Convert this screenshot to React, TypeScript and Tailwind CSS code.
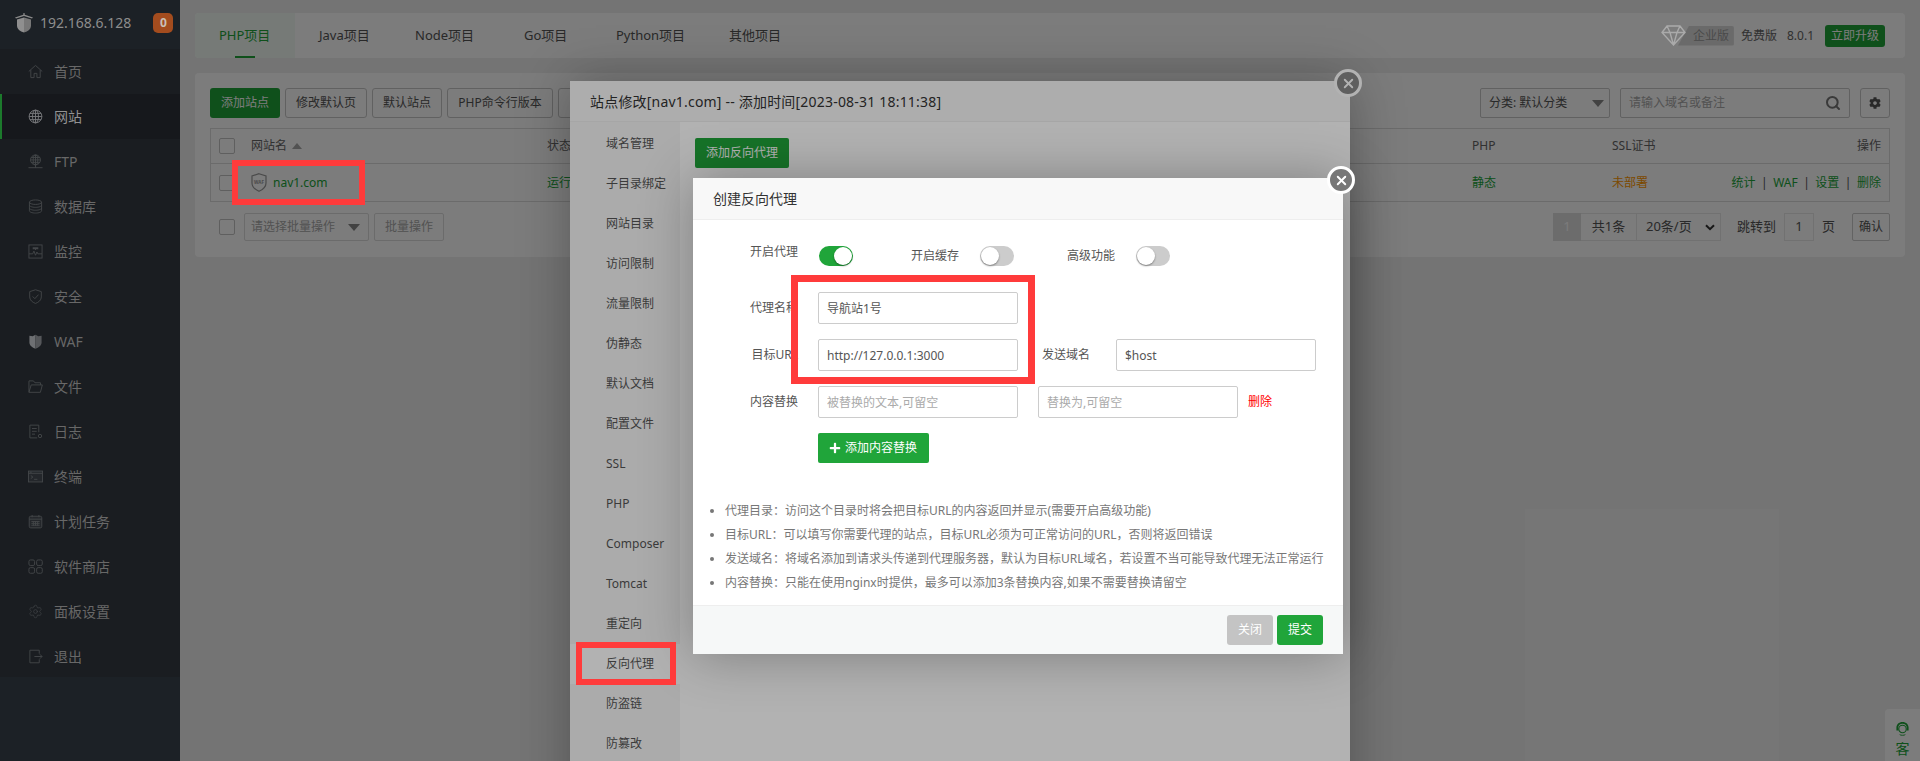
import React from "react";
import { Search, Settings, X } from "lucide-react";
import { FaCog, FaPlus } from "react-icons/fa";

const S = (p: { children: React.ReactNode }) => (
  <svg viewBox="0 0 16 16" width="15" height="15" fill="none" stroke="currentColor" strokeWidth="1" className="shrink-0">
    {p.children}
  </svg>
);

const Globe = () => (
  <>
    <circle cx="8" cy="8" r="6.8" />
    <ellipse cx="8" cy="8" rx="3.2" ry="6.8" />
    <path d="M1.2 8H14.8M2 4.7H14M2 11.3H14M8 1.2V14.8" />
  </>
);

const menu: { t: string; i: React.ReactNode; active?: boolean }[] = [
  { t: "首页", i: <S><path d="M.8 8 8 1.5 15.2 8M3 6.5V14.5H6.5V10H9.5V14.5H13V6.5" /></S> },
  { t: "网站", active: true, i: <S><Globe /></S> },
  { t: "FTP", i: <S><circle cx="8" cy="6.3" r="5.3" /><ellipse cx="8" cy="6.3" rx="2.5" ry="5.3" /><path d="M2.7 6.3H13.3M3.4 3.7H12.6M3.4 8.9H12.6M8 1V14.6M.5 14.6H15.5" /></S> },
  { t: "数据库", i: <S><ellipse cx="8" cy="3.4" rx="6.5" ry="2.4" /><path d="M1.5 3.4V12.6C1.5 13.9 4.4 15 8 15S14.5 13.9 14.5 12.6V3.4M1.5 6.5C1.5 7.8 4.4 8.9 8 8.9S14.5 7.8 14.5 6.5M1.5 9.6C1.5 10.9 4.4 12 8 12S14.5 10.9 14.5 9.6" /></S> },
  { t: "监控", i: <S><rect x="1" y="1" width="14" height="14" /><path d="M5 3.5H11V5.5H8.5V6.5H7.5V5.5H5Z" fill="currentColor" stroke="none" /><path d="M1 10.5H5L6.3 7.5 8 12 9.5 8.5 10.5 10.5H15" /></S> },
  { t: "安全", i: <S><path d="M8 .8 14.2 2.8V8.5C14.2 12 11.2 14.2 8 15.4 4.8 14.2 1.8 12 1.8 8.5V2.8Z" /><path d="M5 8 7.3 10.3 11.2 6" /></S> },
  { t: "WAF", i: <S><path d="M8 .8 5 2.5 1.5 1.8V9C1.5 12.2 4.5 14.4 8 15.6Z" fill="#6e7073" stroke="none" /><path d="M8 .8 11 2.5 14.5 1.8V9C14.5 12.2 11.5 14.4 8 15.6Z" fill="#55575a" stroke="none" /></S> },
  { t: "文件", i: <S><path d="M1 14.2V2H5.8L7.3 4H13.3V6.3M1 14.2H13.2L15.3 6.3H3.4Z" /></S> },
  { t: "日志", i: <S><path d="M11.5 8.8V1.2H2V14.8H9.8M4.2 4.8H9.3M4.2 7.8H9.3M4.2 10.8H7.5" /><circle cx="12.8" cy="12.8" r="1.8" /></S> },
  { t: "终端", i: <S><rect x=".5" y="2.2" width="15" height="11.6" fill="#24272b" /><path d="M.5 4.6H15.5M1.8 3.4H4" /><path d="M3 7 5.2 8.6 3 10.2M6.5 11H10" /></S> },
  { t: "计划任务", i: <S><rect x="1.3" y="2.4" width="13.4" height="12.4" rx="1.6" fill="#24272b" /><path d="M4.4 1V3.5M11.6 1V3.5M1.3 5.5H14.7M3.6 8H12.4M3.6 10H12.4M3.6 12H12.4M5.7 7.5V12.5M8 7.5V12.5M10.3 7.5V12.5" /></S> },
  { t: "软件商店", i: <S><rect x="1" y="1" width="6" height="6" rx="1.6" /><rect x="9.2" y="1" width="6" height="6" rx="1.6" /><rect x="1" y="9.2" width="6" height="6" rx="1.6" /><rect x="9.2" y="9.2" width="6" height="6" rx="1.6" /></S> },
  { t: "面板设置", i: <Settings size={15} strokeWidth={1} className="shrink-0" /> },
  { t: "退出", i: <S><path d="M12 5V1.3H2V14.7H12V11M6.8 8H15M12.6 5.6 15 8 12.6 10.4" /></S> },
];

const Btn = ({ w, children }: { w: string; children?: React.ReactNode }) => (
  <div className={`${w} flex h-[30px] shrink-0 items-center justify-center rounded-[3px] border border-[#c8c8c8] text-[12px] text-[#555]`}>{children}</div>
);

const Check = () => <div className="h-4 w-4 shrink-0 rounded-[2px] border border-[#c4c4c4] bg-white" />;

const Caret = () => (
  <svg width="12" height="7" viewBox="0 0 12 7" className="shrink-0"><path d="M0 0H12L6 7Z" fill="#888" /></svg>
);

const Toggle = ({ on }: { on?: boolean }) => (
  <div className={`${on ? "justify-end bg-[#20a53a]" : "justify-start bg-[#ccc]"} flex h-5 w-[34px] shrink-0 items-center rounded-full p-px`}>
    <div className="h-[18px] w-[18px] rounded-full bg-white shadow-[0_1px_2px_rgba(0,0,0,0.4)]" />
  </div>
);

const Field = ({ value, ph, w = "w-[200px]" }: { value?: string; ph?: string; w?: string }) => (
  <input
    readOnly
    defaultValue={value}
    placeholder={ph}
    className={`${w} h-8 shrink-0 rounded-[2px] border border-[#ccc] pl-2 text-[12px] text-[#555] outline-none placeholder:text-[#aaa]`}
  />
);

const Label = ({ children, c = "" }: { children: React.ReactNode; c?: string }) => (
  <div className={`w-[105px] shrink-0 pr-5 text-right text-[12px] text-[#555] ${c}`}>{children}</div>
);

const sideItems = ["域名管理", "子目录绑定", "网站目录", "访问限制", "流量限制", "伪静态", "默认文档", "配置文件", "SSL", "PHP", "Composer", "Tomcat", "重定向", "反向代理", "防盗链", "防篡改"];

const tabs = [
  { t: "Java项目", w: "w-[96px]" },
  { t: "Node项目", w: "w-[109px]" },
  { t: "Go项目", w: "w-[92px]" },
  { t: "Python项目", w: "w-[113px]" },
  { t: "其他项目", w: "w-[100px]" },
];

const notes = [
  "代理目录：访问这个目录时将会把目标URL的内容返回并显示(需要开启高级功能)",
  "目标URL：可以填写你需要代理的站点，目标URL必须为可正常访问的URL，否则将返回错误",
  "发送域名：将域名添加到请求头传递到代理服务器，默认为目标URL域名，若设置不当可能导致代理无法正常运行",
  "内容替换：只能在使用nginx时提供，最多可以添加3条替换内容,如果不需要替换请留空",
];

const Close = ({ pos, inner }: { pos: string; inner: string }) => (
  <div className={`absolute ${pos} ${inner} flex h-7 w-7 items-center justify-center rounded-full border-[3px] border-white`}>
    <X size={15} strokeWidth={3} color="#fff" />
  </div>
);

export default function App() {
  return (
    <div className="relative flex h-screen w-full overflow-hidden bg-[#f0f0f0] font-['Noto_Sans','Noto_Sans_CJK_SC',sans-serif]">
      {/* sidebar */}
      <aside className="relative z-20 flex w-[180px] shrink-0 flex-col bg-[#1c2126]">
        <div className="flex h-[49px] shrink-0 items-start pt-[13px] pl-[15px]">
          <svg width="18" height="20" viewBox="0 0 18 20" className="shrink-0">
            <path d="M0 4.5 9 1.5 18 4.5 17 5.5 9 3 1 5.5Z" fill="#8a8a8a" />
            <path d="M8.4 0H9.6V2H8.4Z" fill="#8a8a8a" />
            <path d="M2 6.5 9 4.5V19.5C5 18.5 2 16 2 12.5Z" fill="#8f8f8f" />
            <path d="M16 6.5 9 4.5V19.5C13 18.5 16 16 16 12.5Z" fill="#777" />
          </svg>
          <span className="ml-[7px] text-[14px] leading-5 text-[#8d8d8d]">192.168.6.128</span>
          <span className="ml-[22px] flex h-5 w-5 items-center justify-center rounded-[5px] bg-[#a34c1e] text-[12px] font-bold text-[#c9c0b8]">0</span>
        </div>
        <nav className="h-[628px] shrink-0 bg-[#1a1d21] text-[14px]">
          {menu.map((m) => (
            <div
              key={m.t}
              className={`${m.active ? "border-[#1c7a2c] bg-[#16181c] text-[#929292]" : "border-transparent text-[#686868]"} flex h-[45px] items-center border-l-2 pl-[26px]`}
            >
              <span className={m.active ? "text-[#77797c]" : "text-[#434649]"}>{m.i}</span>
              <span className="ml-[11px]">{m.t}</span>
            </div>
          ))}
        </nav>
      </aside>

      {/* page */}
      <main className="flex min-w-0 flex-1 flex-col gap-[15px] px-[15px] pt-[13px]">
        <div className="flex h-[45px] shrink-0 items-center justify-between rounded-[4px] bg-white">
          <div className="flex h-full text-[13px] text-[#555]">
            <div className="relative flex h-full w-[100px] items-center rounded-l-[4px] bg-[#f2fbf5] pl-6 text-[#20a53a]">
              PHP项目
              <div className="absolute bottom-0 left-10 h-[2px] w-5 bg-[#20a53a]" />
            </div>
            {tabs.map((t) => (
              <div key={t.t} className={`${t.w} flex h-full items-center pl-6`}>{t.t}</div>
            ))}
          </div>
          <div className="flex items-center pr-5 text-[12px] text-[#666]">
            <svg width="25" height="21" viewBox="0 0 25 21" fill="none" stroke="#aaa" strokeWidth="1.4" className="relative z-10 shrink-0">
              <path d="M6 1H19L24 7.5 12.5 20 1 7.5ZM1 7.5H24M6 1 9 7.5 12.5 20 16 7.5 19 1" />
            </svg>
            <div className="-ml-2 flex h-5 w-[56px] items-center justify-end rounded-r-[2px] bg-[#dcdcdc] pr-[5px] text-[#999] [clip-path:polygon(20%_0,100%_0,100%_100%,0_100%)]">企业版</div>
            <span className="ml-[7px]">免费版</span>
            <span className="ml-[10px]">8.0.1</span>
            <div className="ml-[11px] flex h-[22px] w-[60px] items-center justify-center rounded-[3px] bg-[#20a53a] text-white">立即升级</div>
          </div>
        </div>

        <div className="h-[184px] shrink-0 rounded-[4px] bg-white p-[15px]">
          <div className="flex justify-between">
            <div className="flex gap-[5px]">
              <div className="flex h-[30px] w-[70px] items-center justify-center rounded-[3px] bg-[#20a53a] text-[12px] text-white">添加站点</div>
              <Btn w="w-[82px]">修改默认页</Btn>
              <Btn w="w-[70px]">默认站点</Btn>
              <Btn w="w-[106px]">PHP命令行版本</Btn>
              <Btn w="w-[60px]" />
            </div>
            <div className="flex gap-[10px]">
              <div className="flex h-[30px] w-[130px] items-center justify-between rounded-[2px] border border-[#c8c8c8] pr-[5px] pl-2 text-[12px] text-[#555]">
                <span>分类: 默认分类</span><Caret />
              </div>
              <div className="flex h-[30px] w-[230px] items-center justify-between rounded-[2px] border border-[#c8c8c8] pr-2 pl-2 text-[12px] text-[#aaa]">
                <span>请输入域名或备注</span><Search size={16} strokeWidth={3} color="#777" />
              </div>
              <div className="flex h-[30px] w-[30px] items-center justify-center rounded-[3px] border border-[#c8c8c8] text-[#555]"><FaCog size={12} /></div>
            </div>
          </div>

          <div className="mt-[10px] border border-[#ddd] text-[12px] text-[#666]">
            <div className="flex h-[35px] items-center border-b border-[#ddd]">
              <div className="w-[40px] shrink-0 pl-2"><Check /></div>
              <div className="flex w-[296px] shrink-0 items-center gap-[5px]">
                网站名
                <svg width="10" height="6" viewBox="0 0 10 6"><path d="M0 6H10L5 0Z" fill="#aaa" /></svg>
              </div>
              <div className="w-[925px] shrink-0">状态</div>
              <div className="w-[140px] shrink-0">PHP</div>
              <div className="flex-1">SSL证书</div>
              <div className="pr-2">操作</div>
            </div>
            <div className="flex h-[37px] items-center">
              <div className="w-[40px] shrink-0 pl-2"><Check /></div>
              <div className="flex w-[296px] shrink-0 items-center gap-[6px]">
                <svg width="16" height="19" viewBox="0 0 16 19" fill="none" className="shrink-0">
                  <path d="M8 .7 15 3V10C15 14 11.5 16.8 8 18.3 4.5 16.8 1 14 1 10V3Z" stroke="#999" strokeWidth="1.2" />
                  <text x="8" y="10.6" textAnchor="middle" fontSize="4.5" fontWeight="700" fill="#999">WAF</text>
                </svg>
                <span className="text-[12px] text-[#20a53a]">nav1.com</span>
              </div>
              <div className="w-[925px] shrink-0 text-[#20a53a]">运行中</div>
              <div className="w-[140px] shrink-0 text-[#20a53a]">静态</div>
              <div className="flex-1 text-[#ff9900]">未部署</div>
              <div className="flex gap-[5.5px] pr-2 text-[#20a53a]">
                <span>统计</span><span className="text-[#555]">|</span><span>WAF</span><span className="text-[#555]">|</span><span>设置</span><span className="text-[#555]">|</span><span>删除</span>
              </div>
            </div>
          </div>

          <div className="mt-[11px] flex items-center">
            <div className="pl-[9px]"><Check /></div>
            <div className="ml-[9px] flex h-7 w-[125px] items-center justify-between rounded-[2px] border border-[#ddd] px-[6px] pr-2 text-[12px] text-[#aaa]">
              <span>请选择批量操作</span><Caret />
            </div>
            <div className="ml-[5px] flex h-7 w-[70px] items-center justify-center rounded-[2px] border border-[#ddd] text-[12px] text-[#aaa]">批量操作</div>
            <div className="ml-auto flex h-7 items-center text-[13px] text-[#555]">
              <div className="flex h-full w-[28px] items-center justify-center bg-[#dedede] text-white">1</div>
              <div className="flex h-full w-[55px] items-center justify-center border-y border-[#e8e8e8]">共1条</div>
              <div className="flex h-full w-[85px] items-center justify-between border border-[#e8e8e8] pr-[5px] pl-[9px]">
                <span>20条/页</span>
                <svg width="10" height="7" viewBox="0 0 10 7" fill="none"><path d="M1 1.2 5 5.2 9 1.2" stroke="#333" strokeWidth="2" /></svg>
              </div>
              <span className="ml-4">跳转到</span>
              <div className="ml-2 flex h-full w-[30px] items-center justify-center border border-[#e8e8e8]">1</div>
              <span className="ml-2">页</span>
              <div className="ml-[17px] flex h-full w-[38px] items-center justify-center rounded-[2px] border border-[#ccc] text-[12px]">确认</div>
            </div>
          </div>
        </div>
      </main>

      {/* customer service tab */}
      <div className="absolute right-0 bottom-0 flex h-[52px] w-[35px] flex-col items-center rounded-tl-[4px] bg-white pt-3 text-[14px] leading-[19px] text-[#20a53a]">
        <svg width="15" height="15" viewBox="0 0 16 16" className="shrink-0">
          <path d="M8 1C4.1 1 1.5 3.6 1.5 7V10H3.5V7C3.5 4.6 5.5 3 8 3S12.5 4.6 12.5 7V10H14.5V7C14.5 3.6 11.9 1 8 1Z" fill="#20a53a" />
          <circle cx="8" cy="8.5" r="4" fill="none" stroke="#20a53a" strokeWidth="1.2" />
          <path d="M5 14.5C6 15.5 10 15.5 11 14.5" stroke="#20a53a" fill="none" />
        </svg>
        <span className="mt-[3px]">客</span>
        <span>服</span>
      </div>

      <div className="absolute inset-0 bg-black/30" />

      {/* site settings modal */}
      <div className="absolute top-[81px] left-[570px] flex h-[760px] w-[780px] flex-col bg-white shadow-[1px_1px_50px_rgba(0,0,0,0.3)]">
        <div className="flex h-[41px] shrink-0 items-center border-b border-[#eee] bg-[#f8f8f8] pl-5 text-[14px] tracking-[0.2px] text-[#333]">
          站点修改[nav1.com] -- 添加时间[2023-08-31 18:11:38]
        </div>
        <div className="flex min-h-0 flex-1">
          <div className="w-[110px] shrink-0 bg-[#f5f5f5] pt-[2px] text-[12px] text-[#555]">
            {sideItems.map((t) => (
              <div key={t} className={`${t === "反向代理" ? "bg-white" : ""} flex h-10 items-center pl-9`}>{t}</div>
            ))}
          </div>
          <div className="flex-1 pt-4 pl-[15px]">
            <div className="flex h-[30px] w-[94px] items-center justify-center rounded-[2px] bg-[#20a53a] text-[12px] text-white">添加反向代理</div>
          </div>
        </div>
        <Close pos="-top-3 left-[764px]" inner="bg-[#888]" />
      </div>

      <div className="absolute inset-0 bg-black/30" />

      {/* reverse proxy modal */}
      <div className="absolute top-[178px] left-[693px] flex h-[476px] w-[650px] flex-col bg-white shadow-[1px_1px_50px_rgba(0,0,0,0.3)]">
        <div className="flex h-[42px] shrink-0 items-center border-b border-[#eee] bg-[#f8f8f8] pl-5 text-[14px] text-[#333]">创建反向代理</div>
        <div className="flex flex-1 flex-col">
          <div className="mt-[26px] flex h-5 items-center pl-[20px]">
            <Label c="pb-2"><span className="block">开启代理</span></Label>
            <div className="ml-px"><Toggle on /></div>
            <span className="ml-[58px] text-[12px] text-[#555]">开启缓存</span>
            <div className="ml-[21px]"><Toggle /></div>
            <span className="ml-[53px] text-[12px] text-[#555]">高级功能</span>
            <div className="ml-[21px]"><Toggle /></div>
          </div>
          <div className="mt-[26px] flex items-center pl-[20px]">
            <Label>代理名称</Label>
            <Field value="导航站1号" />
          </div>
          <div className="mt-[15px] flex items-center pl-[20px]">
            <Label>目标URL</Label>
            <Field value="http://127.0.0.1:3000" />
            <div className="w-[72px] shrink-0 text-right text-[12px] text-[#555]">发送域名</div>
            <Field value="$host" w="ml-[26px] w-[200px]" />
          </div>
          <div className="mt-[15px] flex items-center pl-[20px]">
            <Label>内容替换</Label>
            <Field ph="被替换的文本,可留空" />
            <Field ph="替换为,可留空" w="ml-5 w-[200px]" />
            <span className="ml-[10px] text-[12px] text-[#f00]">删除</span>
          </div>
          <div className="mt-[15px] ml-[125px] flex h-[30px] w-[111px] items-center rounded-[2px] bg-[#20a53a] pl-[11px] text-[12px] text-white">
            <FaPlus size={12} />
            <span className="ml-1">添加内容替换</span>
          </div>
          <ul className="mt-9 list-disc pl-[32px] text-[12px] leading-6 text-[#777]">
            {notes.map((n) => <li key={n}>{n}</li>)}
          </ul>
          <div className="mt-auto flex h-[49px] items-center justify-end gap-1 border-t border-[#eee] bg-[#f6f8f8] pr-5 text-[12px] text-white">
            <div className="flex h-[30px] w-[46px] items-center justify-center rounded-[3px] bg-[#c4c4c4]">关闭</div>
            <div className="flex h-[30px] w-[46px] items-center justify-center rounded-[3px] bg-[#20a53a]">提交</div>
          </div>
        </div>
        <Close pos="-top-3 left-[634px]" inner="bg-[#777]" />
      </div>

      {/* red annotation boxes */}
      <div className="absolute top-[160px] left-[232px] h-[45px] w-[133px] border-[6px] border-[#ff3b3b]" />
      <div className="absolute top-[275px] left-[791px] h-[109px] w-[244px] border-[7px] border-[#ff3b3b]" />
      <div className="absolute top-[642px] left-[576px] h-[43px] w-[100px] border-[6px] border-[#ff3b3b]" />
    </div>
  );
}
